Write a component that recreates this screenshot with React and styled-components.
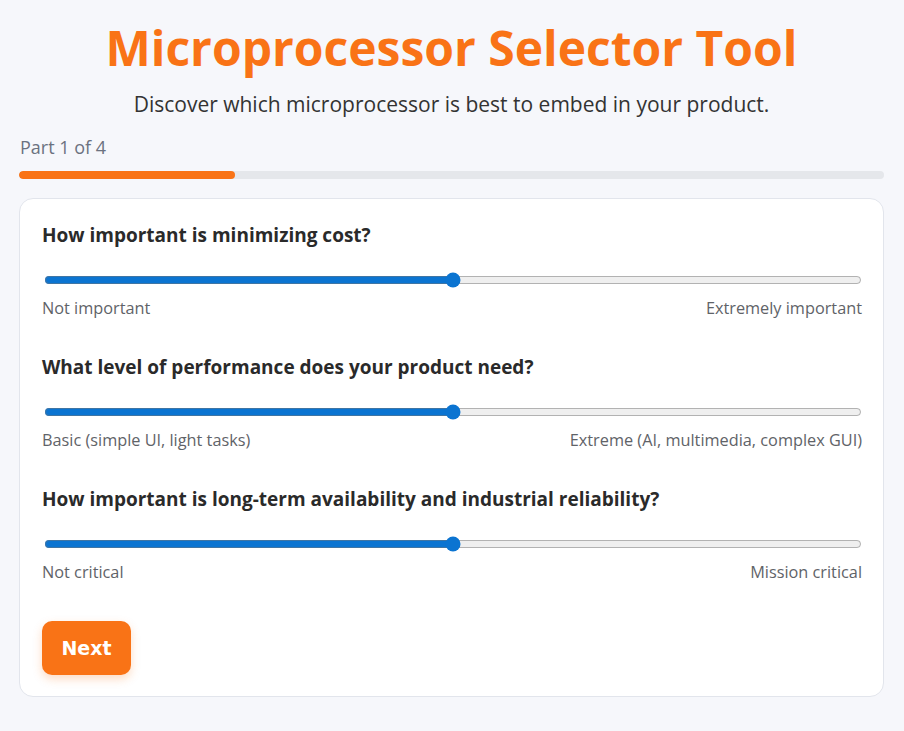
import React, { useState } from "react";
import styled, { createGlobalStyle } from "styled-components";

const GlobalStyle = createGlobalStyle`
  body {
    margin: 0;
    background: #f6f7fb;
    font-family: "Open Sans", "Noto Sans", sans-serif;
    color: #2b2b2b;
  }
`

const Page = styled.div`
  padding: 16px 20px 30px 19px;
  display: flex;
  flex-direction: column;
`
const Title = styled.h1`
  margin: 0;
  text-align: center;
  color: #f97316;
  font-size: 48px;
  font-weight: 700;
  line-height: 64px;
`
const Subtitle = styled.p`
  margin: 10px 0 0 0;
  text-align: center;
  font-size: 21px;
  line-height: 28px;
  color: #333;
`
const PartLabel = styled.div`
  margin-top: 17px;
  margin-left: 1px;
  font-size: 18px;
  line-height: 24px;
  color: #6b7280;
`
const ProgressTrack = styled.div`
  margin-top: 12px;
  height: 8px;
  border-radius: 4px;
  background: #e5e7eb;
  overflow: hidden;
`
const ProgressFill = styled.div`
  height: 100%;
  background: #f97316;
  border-radius: 4px;
`
const Card = styled.div`
  margin-top: 19px;
  background: #fff;
  border: 1px solid #e2e5ec;
  border-radius: 14px;
  padding: 22px 21px 21px 22px;
  display: flex;
  flex-direction: column;
  gap: 34px;
`
const Question = styled.div`
  display: flex;
  flex-direction: column;
`
const QuestionTitle = styled.div`
  font-size: 19px;
  font-weight: 700;
  line-height: 28px;
  color: #2a2a2a;
`
const Range = styled.input`
  margin: 23px 2px 9px 2px;
  width: calc(100% - 2px);
  accent-color: #0b74d1;
`
const Labels = styled.div`
  display: flex;
  justify-content: space-between;
  font-size: 16.3px;
  line-height: 22px;
  color: #5f6368;
`
const NextButton = styled.button`
  align-self: flex-start;
  margin-top: 4px;
  width: 89px;
  height: 54px;
  border: none;
  border-radius: 10px;
  background: #f97316;
  color: #fff;
  font-family: "DejaVu Sans", sans-serif;
  font-size: 19px;
  font-weight: 700;
  box-shadow: 0 4px 10px rgba(249, 115, 22, 0.25);
  cursor: pointer;
`

const questions = [
  { q: "How important is minimizing cost?", lo: "Not important", hi: "Extremely important" },
  { q: "What level of performance does your product need?", lo: "Basic (simple UI, light tasks)", hi: "Extreme (AI, multimedia, complex GUI)" },
  { q: "How important is long-term availability and industrial reliability?", lo: "Not critical", hi: "Mission critical" },
]

const App = () => {
  const [values, setValues] = useState([50, 50, 50])
  const step = 1
  const total = 4

  return (
    <>
      <GlobalStyle />
      <Page>
        <Title>Microprocessor Selector Tool</Title>
        <Subtitle>Discover which microprocessor is best to embed in your product.</Subtitle>
        <PartLabel>Part {step} of {total}</PartLabel>
        <ProgressTrack>
          <ProgressFill style={{ width: `${(step / total) * 100}%` }} />
        </ProgressTrack>
        <Card>
          {questions.map((item, i) => (
            <Question key={i}>
              <QuestionTitle>{item.q}</QuestionTitle>
              <Range
                type="range"
                min="0"
                max="100"
                value={values[i]}
                onChange={(e) => {
                  const next = [...values]
                  next[i] = Number(e.target.value)
                  setValues(next)
                }}
              />
              <Labels>
                <span>{item.lo}</span>
                <span>{item.hi}</span>
              </Labels>
            </Question>
          ))}
          <NextButton>Next</NextButton>
        </Card>
      </Page>
    </>
  )
}

export default App
